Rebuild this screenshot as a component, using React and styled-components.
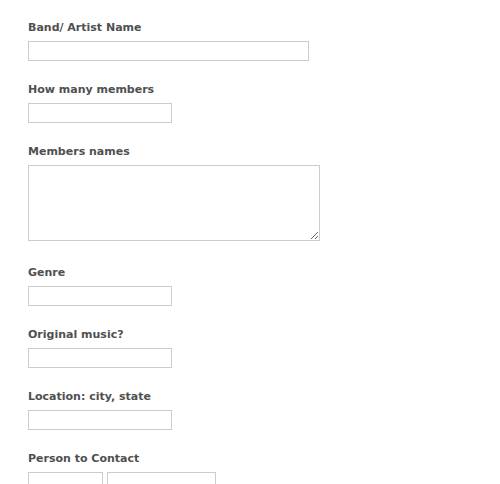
import React from 'react';
import styled, { createGlobalStyle } from 'styled-components';

const GlobalStyle = createGlobalStyle`
    body {
        margin: 0;
        background: #ffffff;
        font-family: "DejaVu Sans", Verdana, sans-serif;
    }
`;

const Form = styled.form`
    display: flex;
    flex-direction: column;
    gap: 20px;
    padding: 19px 28px 0;
`;

const Field = styled.div`
    display: flex;
    flex-direction: column;
    align-items: flex-start;
    padding-bottom: ${p => (p.$tall ? 3 : 0)}px;
`;

const Label = styled.label`
    display: block;
    font-size: 11px;
    font-weight: bold;
    line-height: 18px;
    color: #505050;
    margin-bottom: 4px;
`;

const TextInput = styled.input`
    box-sizing: border-box;
    width: ${p => p.$w}px;
    height: 20px;
    margin: 0;
    padding: 2px 4px;
    border: 1px solid #cccccc;
    border-radius: 0;
    background: #ffffff;
    font-family: inherit;
    font-size: 12px;
    outline: none;
`;

const TextArea = styled.textarea`
    box-sizing: border-box;
    display: block;
    width: ${p => p.$w}px;
    height: 76px;
    margin: 0;
    padding: 2px 4px;
    border: 1px solid #cccccc;
    border-radius: 0;
    font-family: inherit;
    font-size: 12px;
    outline: none;
`;

const Pair = styled.div`
    display: flex;
    gap: 4px;
`;

const App = () => {
    return (
        <>
            <GlobalStyle />
            <Form>
                <Field>
                    <Label>Band/ Artist Name</Label>
                    <TextInput $w={281} />
                </Field>
                <Field>
                    <Label>How many members</Label>
                    <TextInput $w={144} />
                </Field>
                <Field $tall>
                    <Label>Members names</Label>
                    <TextArea $w={292} />
                </Field>
                <Field>
                    <Label>Genre</Label>
                    <TextInput $w={144} />
                </Field>
                <Field>
                    <Label>Original music?</Label>
                    <TextInput $w={144} />
                </Field>
                <Field>
                    <Label>Location: city, state</Label>
                    <TextInput $w={144} />
                </Field>
                <Field>
                    <Label>Person to Contact</Label>
                    <Pair>
                        <TextInput $w={75} />
                        <TextInput $w={109} />
                    </Pair>
                </Field>
            </Form>
        </>
    );
};

export default App;
